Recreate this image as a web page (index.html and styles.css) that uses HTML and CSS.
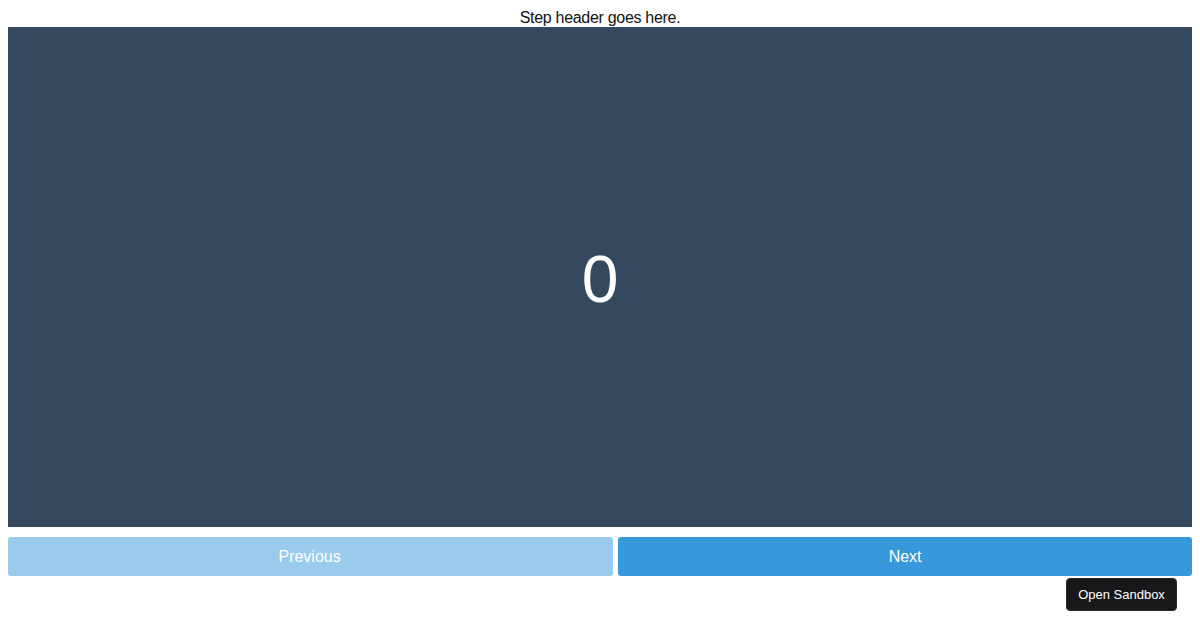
FILE: index.html
```html
<!DOCTYPE html>
<html>
<head>
<meta charset="utf-8">
<link rel="stylesheet" href="styles.css">
</head>
<body>
<div class="step-header">Step header goes here.</div>
<div class="stage"><span class="count">0</span></div>
<div class="nav">
  <button class="btn btn-prev">Previous</button>
  <button class="btn btn-next">Next</button>
</div>
<button class="sandbox">Open Sandbox</button>
</body>
</html>
```

FILE: styles.css
```css
html, body {
  margin: 0;
  padding: 0;
  background: #ffffff;
}
body {
  margin: 8px;
  font-family: "Liberation Sans", Arial, sans-serif;
  color: #111;
}
.step-header {
  text-align: center;
  font-size: 16px;
  line-height: 19px;
  letter-spacing: -0.3px;
}
.stage {
  height: 500px;
  background: #34495e;
  display: flex;
  align-items: center;
  justify-content: center;
}
.count {
  color: #ffffff;
  font-size: 66px;
  line-height: 1;
  margin-top: 4px;
}
.nav {
  display: flex;
  gap: 5px;
  margin-top: 10px;
}
.btn {
  flex: 1 1 auto;
  height: 39px;
  border: none;
  border-radius: 3px;
  color: #ffffff;
  font-family: "Liberation Sans", Arial, sans-serif;
  font-size: 16px;
  padding: 0 10px;
}
.btn-prev {
  background: #9acbed;
  padding-right: 12px;
}
.btn-next {
  background: #3799db;
}
.sandbox {
  position: fixed;
  right: 23px;
  bottom: 19px;
  width: 111px;
  height: 33px;
  background: #18171a;
  color: #ffffff;
  border: 1px solid #2a2a2e;
  border-radius: 4px;
  font-family: "Liberation Sans", Arial, sans-serif;
  font-size: 13px;
  padding: 0;
}
```
